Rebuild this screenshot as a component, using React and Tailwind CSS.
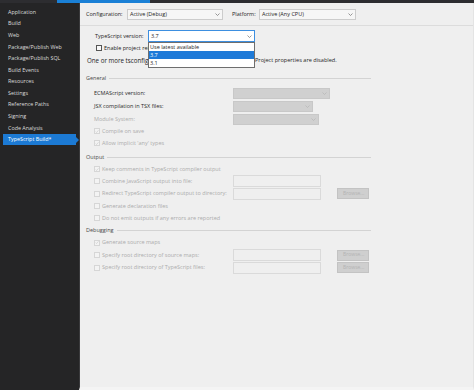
import React from "react";

const navItems = [
  "Application",
  "Build",
  "Web",
  "Package/Publish Web",
  "Package/Publish SQL",
  "Build Events",
  "Resources",
  "Settings",
  "Reference Paths",
  "Signing",
  "Code Analysis",
  "TypeScript Build*",
];

const Chevron = ({ color = "#6d6d6d" }) => (
  <svg width="5" height="3" viewBox="0 0 5 3" className="shrink-0">
    <polyline points="0.5,0.5 2.5,2.5 4.5,0.5" fill="none" stroke={color} strokeWidth="0.7" />
  </svg>
);

const Select = ({ value, className, disabled }) => (
  <div
    className={`flex items-center justify-between h-[11px] px-[2px] border ${
      disabled ? "bg-[#d0d0d0] border-[#c8c8c8]" : "bg-[#f6f6f6] border-[#cccccc] text-[#1e1e1e]"
    } ${className}`}
  >
    <span>{value}</span>
    <Chevron color={disabled ? "#b5b5b5" : "#6d6d6d"} />
  </div>
);

const TextBox = () => <div className="w-[88px] h-[12px] border border-[#dadada] bg-[#efefef]" />;

const Browse = () => (
  <div className="ml-[16px] w-[32px] h-[11px] bg-[#cfcfcf] border border-[#c3c3c3] text-[#b3b3b3] text-[5px] flex items-center pl-[5px]">
    Browse...
  </div>
);

const Check = ({ checked, enabled }) => (
  <div
    className={`w-[6px] h-[6px] border flex items-center justify-center shrink-0 ${
      enabled ? "border-[#555] bg-[#f8f8f8]" : "border-[#d6d6d6] bg-[#f3f3f3]"
    }`}
  >
    {checked && (
      <svg width="5" height="5" viewBox="0 0 5 5">
        <polyline points="0.8,2.6 2,3.8 4.3,1" fill="none" stroke="#c4c4c4" strokeWidth="0.7" />
      </svg>
    )}
  </div>
);

const CheckRow = ({ label, checked, h = "h-[12px]", children }) => (
  <div className={`flex items-center ${h} pl-[14px]`}>
    <div className="flex items-center gap-[2px] w-[139px]">
      <Check checked={checked} />
      <span className="text-[#acacac] whitespace-nowrap">{label}</span>
    </div>
    {children}
  </div>
);

const SelectRow = ({ label, dim, h, w }) => (
  <div className={`flex items-center ${h} pl-[14px]`}>
    <span className={`w-[139px] ${dim ? "text-[#acacac]" : "text-[#2a2a2a]"}`}>{label}</span>
    <Select value="" disabled className={w} />
  </div>
);

const Group = ({ title }) => (
  <div className="flex items-center h-[12px] pl-[6px] pr-[102px] gap-[3px]">
    <span className="text-[#4a4a4a]">{title}</span>
    <div className="flex-1 h-px bg-[#d3d3d3]" />
  </div>
);

export default function App() {
  return (
    <div className="w-[474px] h-[390px] flex flex-col bg-[#252526] font-['Open_Sans',sans-serif] text-[5.5px] overflow-hidden">
      {/* tab strip */}
      <div className="h-[3px] flex bg-[#2d2d30]">
        <div className="w-[57px]" />
        <div className="w-[93px] bg-[#1a80d6]" />
      </div>

      <div className="flex flex-1">
        {/* sidebar */}
        <div className="w-[79px] pt-[3px] flex flex-col text-[5.4px]">
          {navItems.map((item, i) => {
            const active = i === navItems.length - 1;
            return (
              <div
                key={item}
                className={`relative h-[11.6px] flex items-center mx-[3px] pl-[5px] whitespace-nowrap ${
                  active ? "bg-[#1c7ad4] text-white" : "text-[#dcdcdc]"
                }`}
              >
                {item}
                {active && (
                  <div className="absolute right-[-3px] top-[3px] w-0 h-0 border-y-[3px] border-y-transparent border-l-[3px] border-l-[#1c7ad4]" />
                )}
              </div>
            );
          })}
        </div>

        {/* property page */}
        <div className="flex-1 bg-[#efefef] border-l border-[#3a3a3c] border-r border-r-[#e4e4e4] border-b-[3px] border-b-[#f4f4f4] flex flex-col text-[#1e1e1e]">
          <div className="h-[23px] flex items-center pl-[6px] border-b border-[#dcdcdc]">
            <span className="w-[41px]">Configuration:</span>
            <Select value="Active (Debug)" className="w-[96px]" />
            <span className="ml-[9px] w-[27px]">Platform:</span>
            <Select value="Active (Any CPU)" className="w-[97px]" />
          </div>

          <div className="h-[4px]" />

          {/* TypeScript version */}
          <div className="flex items-center h-[12px] pl-[15px]">
            <span className="w-[53px]">TypeScript version:</span>
            <div className="relative w-[107px] h-[12px]">
              <div className="h-full flex items-center justify-between px-[2px] bg-white border border-[#3d8fe0]">
                <span>3.7</span>
                <Chevron />
              </div>
              <div className="absolute left-0 top-full w-full z-10 bg-white border border-[#6e6e6e] flex flex-col">
                <div className="h-[8px] flex items-center pl-[1px]">Use latest available</div>
                <div className="h-[8px] flex items-center pl-[1px] bg-[#1e7ad8] text-white">3.7</div>
                <div className="h-[8px] flex items-center pl-[1px]">3.1</div>
              </div>
            </div>
          </div>

          <div className="flex items-center h-[12px] pl-[16px] gap-[2px]">
            <Check enabled />
            <span>Enable project references</span>
          </div>

          <div className="flex items-center h-[13px] pl-[7px] text-[6.2px] whitespace-nowrap">
            <span className="inline-block w-[168px] shrink-0">One or more tsconfig.json files detected.</span>
            <span className="text-[5.6px]">Project properties are disabled.</span>
          </div>

          <div className="h-[5px]" />
          <Group title="General" />
          <div className="h-[3px]" />
          <SelectRow label="ECMAScript version:" h="h-[13px]" w="w-[97px]" />
          <SelectRow label="JSX compilation in TSX files:" h="h-[13px]" w="w-[80px]" />
          <SelectRow label="Module System:" dim h="h-[12px]" w="w-[86px]" />
          <CheckRow label="Compile on save" checked />
          <CheckRow label="Allow implicit 'any' types" checked />

          <div className="h-[2px]" />
          <Group title="Output" />
          <CheckRow label="Keep comments in TypeScript compiler output" checked />
          <CheckRow label="Combine JavaScript output into file:">
            <TextBox />
          </CheckRow>
          <CheckRow label="Redirect TypeScript compiler output to directory:" h="h-[13px]">
            <TextBox />
            <Browse />
          </CheckRow>
          <CheckRow label="Generate declaration files" />
          <CheckRow label="Do not emit outputs if any errors are reported" />

          <Group title="Debugging" />
          <CheckRow label="Generate source maps" checked h="h-[13px]" />
          <CheckRow label="Specify root directory of source maps:">
            <TextBox />
            <Browse />
          </CheckRow>
          <CheckRow label="Specify root directory of TypeScript files:" h="h-[13px]">
            <TextBox />
            <Browse />
          </CheckRow>

          <div className="flex-1" />
        </div>
      </div>
    </div>
  );
}
